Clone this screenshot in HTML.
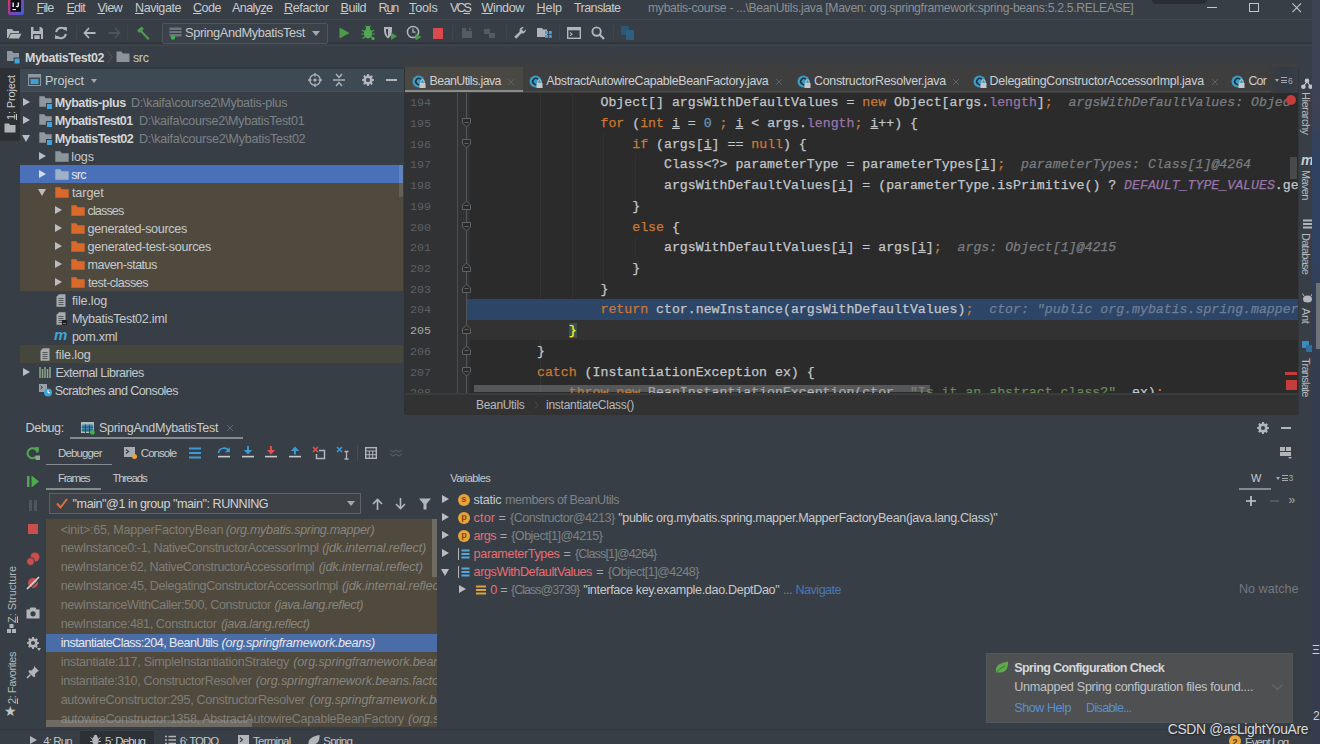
<!DOCTYPE html>
<html>
<head>
<meta charset="utf-8">
<title>mybatis-course - BeanUtils.java</title>
<style>
*{box-sizing:border-box;margin:0;padding:0}
html,body{width:1320px;height:744px;overflow:hidden;background:#383e45}
body{position:relative;font-family:"Liberation Sans",sans-serif;font-size:12.5px;color:#c3c6c9}
.a{position:absolute;white-space:pre}
.r{position:absolute}
u{text-decoration:underline;text-underline-offset:1px;text-decoration-thickness:1px}
svg{position:absolute;overflow:visible}
.mi{top:-1px;font-size:13px;line-height:16px;color:#c8cacc}
.tt{font-size:12.6px;line-height:18px;color:#c6c9cc}
.tb{font-weight:bold;color:#d3d5d7}
.tg{color:#7d8287}
.ln{left:410px;font-family:"Liberation Mono",monospace;font-size:12.6px;line-height:20px;color:#5c6064}
.cl{left:473.5px;font-family:"Liberation Mono",monospace;font-size:13.23px;line-height:20px;color:#c2c6ca;-webkit-text-stroke:0.250px currentColor}
.k{color:#cc7832}.f{color:#9876aa}.n{color:#6897bb}.h{color:#7a7d80;font-style:italic}.c{color:#9876aa;font-style:italic}.s{color:#6a8759}
.tab{font-size:12.5px;line-height:23px;color:#cdcfd1}
.fr{left:61px;font-size:12.5px;line-height:19px;color:#7f7d76}
.fr i{color:#85837b}
.vr{font-size:12.5px;line-height:18px;color:#c6c9cc}
.vn{color:#e2777a}.vg{color:#7d8287}
.sb{font-size:11.5px;line-height:14px;color:#c3c6c9}
.vt{font-size:11.5px;line-height:14px;color:#c3c6c9;transform-origin:0 0}
</style>
</head>
<body>
<div class="r" style="left:0px;top:0px;width:1320px;height:18px;background:#383e45;"></div>
<svg style="left:7.500px;top:-1.500px" width="16" height="16" viewBox="0 0 16 16"><defs><linearGradient id="ijg" x1="0" y1="0" x2="1" y2="0.600"><stop offset="0" stop-color="#ee3358"/><stop offset="0.450" stop-color="#8a3fa8"/><stop offset="1" stop-color="#4a5ad0"/></linearGradient></defs><rect x="0" y="0" width="16" height="16" rx="2.500" fill="url(#ijg)"/><rect x="2.500" y="0" width="10.500" height="12.800" fill="#0d0d18"/><rect x="4.500" y="10" width="3.500" height="1.100" fill="#fff"/><rect x="4.500" y="3.500" width="1.300" height="4.500" fill="#fff"/><path d="M8 7.300c1.500 0.800 2.300 0.300 2.300-1V3.500" stroke="#fff" stroke-width="1.300" fill="none"/></svg>
<div class="a mi" style="left:36.5px;top:0px;font-size:12.6px;letter-spacing:-0.826px;"><u>F</u>ile</div>
<div class="a mi" style="left:66.5px;top:0px;font-size:12.6px;letter-spacing:-0.803px;"><u>E</u>dit</div>
<div class="a mi" style="left:97.5px;top:0px;font-size:12.6px;letter-spacing:-0.646px;"><u>V</u>iew</div>
<div class="a mi" style="left:135px;top:0px;font-size:12.6px;letter-spacing:-0.466px;"><u>N</u>avigate</div>
<div class="a mi" style="left:193px;top:0px;font-size:12.6px;letter-spacing:-0.531px;"><u>C</u>ode</div>
<div class="a mi" style="left:232px;top:0px;font-size:12.6px;letter-spacing:-0.618px;">Analy<u>z</u>e</div>
<div class="a mi" style="left:284px;top:0px;font-size:12.6px;letter-spacing:-0.390px;"><u>R</u>efactor</div>
<div class="a mi" style="left:340.5px;top:0px;font-size:12.6px;letter-spacing:-0.504px;"><u>B</u>uild</div>
<div class="a mi" style="left:378.5px;top:0px;font-size:12.6px;letter-spacing:-1.205px;">R<u>u</u>n</div>
<div class="a mi" style="left:409px;top:0px;font-size:12.6px;letter-spacing:-0.183px;"><u>T</u>ools</div>
<div class="a mi" style="left:450px;top:0px;font-size:12.6px;letter-spacing:-1.970px;">VC<u>S</u></div>
<div class="a mi" style="left:481.5px;top:0px;font-size:12.6px;letter-spacing:-0.386px;"><u>W</u>indow</div>
<div class="a mi" style="left:536.5px;top:0px;font-size:12.6px;letter-spacing:-0.104px;"><u>H</u>elp</div>
<div class="a mi" style="left:574px;top:0px;font-size:12.6px;letter-spacing:-0.617px;">Translate</div>
<div class="a mi" style="left:648px;top:0px;color:#8b9095;font-size:12.2px;letter-spacing:-0.308px;">mybatis-course - ...\BeanUtils.java [Maven: org.springframework:spring-beans:5.2.5.RELEASE]</div>
<div class="r" style="left:1152px;top:-4px;width:55px;height:7.5px;background:#2a2e34;border-radius:4px"></div>
<div class="r" style="left:1207px;top:7px;width:9.5px;height:1.3px;background:#c3c6c9;"></div>
<div class="r" style="left:1248.500px;top:2.500px;width:10px;height:9.500px;border:1.200px solid #c3c6c9"></div>
<svg style="left:1291.500px;top:2.500px" width="9.500" height="9.500" viewBox="0 0 11 11"><path d="M0.5 0.5L10.5 10.5M10.5 0.5L0.5 10.5" stroke="#c3c6c9" stroke-width="1.300" fill="none"/></svg>
<div class="r" style="left:0px;top:18.5px;width:1320px;height:1px;background:#424850;"></div>
<div class="r" style="left:0px;top:42px;width:1320px;height:2.4px;background:#30353b;"></div>
<div class="r" style="left:0px;top:44.5px;width:1320px;height:1px;background:#40464d;"></div>
<svg style="left:6px;top:26px" width="16" height="14" viewBox="0 0 16 14"><path d="M1 3h5l1.5 2H13v2H4.5L2 12H1z" fill="#b2b6ba"/><path d="M5 7.8h10.5L13 12.5H2.6z" fill="#b2b6ba"/></svg>
<svg style="left:30px;top:26px" width="14" height="14" viewBox="0 0 14 14"><path d="M1 1h10l2 2v10H1z" fill="#b2b6ba"/><rect x="3.5" y="1" width="6" height="4" fill="#383e45"/><rect x="3" y="8" width="8" height="5" fill="#383e45"/><rect x="4.3" y="9.3" width="5.4" height="3.7" fill="#b2b6ba"/></svg>
<svg style="left:54px;top:26px" width="14" height="14" viewBox="0 0 14 14"><path d="M2.2 6.2A5 5 0 0 1 11 3.6" stroke="#b2b6ba" stroke-width="2" fill="none"/><path d="M9 1l4.2 0.2-0.6 4.4z" fill="#b2b6ba"/><path d="M11.8 7.8A5 5 0 0 1 3 10.4" stroke="#b2b6ba" stroke-width="2" fill="none"/><path d="M5 13l-4.2-0.2 0.6-4.4z" fill="#b2b6ba"/></svg>
<div class="r" style="left:76px;top:25px;width:1px;height:16px;background:#41464c;"></div>
<svg style="left:83px;top:27px" width="13" height="12" viewBox="0 0 13 12"><path d="M6 1L1.5 6 6 11M1.5 6H12.5" stroke="#b2b6ba" stroke-width="1.8" fill="none"/></svg>
<svg style="left:108px;top:27px" width="13" height="12" viewBox="0 0 13 12"><path d="M7 1L11.5 6 7 11M11.5 6H0.5" stroke="#50555a" stroke-width="1.8" fill="none"/></svg>
<div class="r" style="left:127px;top:25px;width:1px;height:16px;background:#41464c;"></div>
<svg style="left:135px;top:25px" width="16" height="16" viewBox="0 0 16 16"><path d="M2 5.5L6.5 1.5 9 4 4.5 8z" fill="#4f9c4f"/><path d="M6.5 5L14.5 13.5 13 15 5 6.5z" fill="#4f9c4f"/></svg>
<div class="r" style="left:162px;top:23px;width:166px;height:21px;border:1px solid #50555b;border-radius:2px;background:#3b4148"></div>
<svg style="left:169px;top:27px" width="14" height="13" viewBox="0 0 14 13"><rect x="0.5" y="0.5" width="12" height="9" fill="#6d747b"/><rect x="0.5" y="3" width="12" height="1" fill="#383e45"/><rect x="0.5" y="6" width="12" height="1" fill="#383e45"/><circle cx="4" cy="10.5" r="2.2" fill="#3fb24d"/></svg>
<div class="a mi" style="left:185px;top:24px;line-height:18px;color:#c8cacc;font-size:12.8px;letter-spacing:-0.368px;">SpringAndMybatisTest</div>
<div class="r" style="left:312px;top:31px;width:0;height:0;border-style:solid;border-width:5px 4.5px 0 4.5px;border-color:#a4a8ac transparent transparent transparent"></div>
<svg style="left:339px;top:27px" width="11" height="12" viewBox="0 0 11 12"><path d="M0.5 0.5L10.5 6 0.5 11.5z" fill="#4c9a4c"/></svg>
<svg style="left:361px;top:25px" width="15" height="16" viewBox="0 0 15 16"><ellipse cx="7" cy="8.5" rx="4" ry="5" fill="#4faa4f"/><circle cx="7" cy="3.2" r="2.2" fill="#4faa4f"/><path d="M1 5l3 2M13 5l-3 2M0.5 9h3M13.5 9h-3M1.5 13.5l3-2M12.5 13.5l-3-2M4.5 0.5l1.5 2M9.5 0.5l-1.500 2" stroke="#4faa4f" stroke-width="1.2"/><circle cx="12" cy="13.5" r="1.6" fill="#4faa4f"/></svg>
<svg style="left:383px;top:26px" width="15" height="15" viewBox="0 0 15 15"><path d="M1 1h8v3.5c0 4-2 6.500-4 8C3 11 1 8.500 1 4.500z" fill="#b2b6ba"/><path d="M5 3v7.500C3.800 9 3 7 3 4.500V3z" fill="#383e45"/><path d="M8 6.500l6 3.700-6 3.800z" fill="#4c9a4c"/></svg>
<svg style="left:406px;top:25px" width="16" height="16" viewBox="0 0 16 16"><circle cx="7" cy="7" r="5.600" stroke="#b2b6ba" stroke-width="1.500" fill="none"/><path d="M7 3.500V7.200H9.500" stroke="#b2b6ba" stroke-width="1.300" fill="none"/><path d="M9.500 8.500l6 3.500-6 3.500z" fill="#4c9a4c"/></svg>
<div class="r" style="left:432.5px;top:28px;width:10px;height:10.5px;background:#d94a4e;"></div>
<div class="r" style="left:452px;top:25px;width:1px;height:16px;background:#41464c;"></div>
<svg style="left:460px;top:26px" width="14" height="14" viewBox="0 0 14 14"><path d="M2 2h4v10H2zM6 5h6v7H6z" fill="#565b60"/><path d="M9 1l3 3H9z" fill="#565b60"/></svg>
<svg style="left:483px;top:26px" width="14" height="14" viewBox="0 0 14 14"><path d="M1 3h6v5H1zM6 7h6v5H6z" fill="#565b60"/></svg>
<div class="r" style="left:506px;top:25px;width:1px;height:16px;background:#41464c;"></div>
<svg style="left:513px;top:26px" width="14" height="14" viewBox="0 0 14 14"><path d="M12.800 3.200A3.600 3.600 0 0 1 8.300 7.400L3.200 12.800 1.200 10.800 6.600 5.700A3.600 3.600 0 0 1 10.800 1.200L8.600 3.400 10.600 5.400z" fill="#b2b6ba"/></svg>
<svg style="left:536px;top:26px" width="16" height="14" viewBox="0 0 16 14"><path d="M1 2h5l1 1.500H11V11H1z" fill="#b2b6ba"/><rect x="9" y="5" width="3" height="3" fill="#4a9cd6"/><rect x="12.800" y="5" width="3" height="3" fill="#4a9cd6"/><rect x="9" y="8.800" width="3" height="3" fill="#4a9cd6"/><rect x="12.800" y="8.800" width="3" height="3" fill="#4a9cd6"/></svg>
<div class="r" style="left:559px;top:25px;width:1px;height:16px;background:#41464c;"></div>
<svg style="left:567px;top:27px" width="14" height="12" viewBox="0 0 14 12"><rect x="0.700" y="0.700" width="12.600" height="10.600" stroke="#b2b6ba" stroke-width="1.400" fill="none"/><rect x="0.700" y="0.700" width="12.600" height="2.600" fill="#b2b6ba"/><path d="M3 5.500l2 1.700-2 1.700" stroke="#b2b6ba" stroke-width="1.100" fill="none"/></svg>
<svg style="left:591px;top:26px" width="14" height="14" viewBox="0 0 14 14"><circle cx="5.600" cy="5.600" r="4.200" stroke="#b2b6ba" stroke-width="1.900" fill="none"/><path d="M8.800 8.800L13 13" stroke="#b2b6ba" stroke-width="2.200"/></svg>
<div class="r" style="left:613px;top:25px;width:1px;height:16px;background:#41464c;"></div>
<svg style="left:621px;top:26px" width="13" height="14" viewBox="0 0 13 14"><rect x="0" y="0" width="8" height="9" rx="1" fill="#2b5676"/><rect x="5" y="4" width="8" height="10" rx="1" fill="#2e5f82"/></svg>
<div class="r" style="left:0px;top:68px;width:1320px;height:0px;background:#323539;"></div>
<svg style="left:6px;top:50px" width="15" height="14" viewBox="0 0 15 14"><path d="M1 1h5l1.500 2H13v8H1z" fill="#8e979f"/><rect x="8" y="8" width="6" height="6" fill="#3fa5d8" stroke="#383e45" stroke-width="1"/></svg>
<div class="a tt tb" style="left:25px;top:48.7px;font-size:12.4px;letter-spacing:-0.426px;">MybatisTest02</div>
<svg style="left:106px;top:50px" width="8" height="14" viewBox="0 0 8 14"><path d="M1.500 1L6 7 1.500 13" stroke="#4f5458" stroke-width="1.200" fill="none"/></svg>
<svg style="left:116px;top:51px" width="14" height="11" viewBox="0 0 14 11"><path d="M0.500 0.500h5l1.500 2H13.500v8.500H0.500z" fill="#8b949c"/></svg>
<div class="a tt" style="left:133px;top:48.7px;font-size:12.4px;letter-spacing:-0.343px;">src</div>
<div class="r" style="left:0px;top:68px;width:20px;height:676px;background:#383e45;"></div>
<div class="r" style="left:0px;top:68px;width:20px;height:73px;background:#2d3034;"></div>
<div class="a vt" style="left:4px;top:119.5px;transform:rotate(-90deg);font-size:11px;letter-spacing:-0.147px;color:#c9ccce"><u>1</u>: Project</div>
<svg style="left:4px;top:123px" width="12" height="10" viewBox="0 0 12 10"><path d="M0.5 0.5h4.500l1.200 1.600H11.500V9.500H0.500z" fill="#aeb3b8"/></svg>
<div class="a vt" style="left:5.3px;top:622.5px;transform:rotate(-90deg);font-size:11px;letter-spacing:-0.038px;color:#b4b8bb"><u>Z</u>: Structure</div>
<svg style="left:7px;top:623.5px" width="10" height="10" viewBox="0 0 10 10"><rect x="0" y="5" width="4" height="4" fill="#aeb3b8"/><rect x="5" y="5" width="4" height="4" fill="#aeb3b8"/><rect x="2.500" y="0" width="4" height="4" fill="#aeb3b8"/></svg>
<div class="a vt" style="left:5.3px;top:704px;transform:rotate(-90deg);font-size:11px;letter-spacing:-0.456px;color:#b4b8bb"><u>2</u>: Favorites</div>
<div class="a" style="left:4px;top:702.500px;font-size:14px;line-height:16px;color:#c0c4c7">★</div>
<div class="r" style="left:20px;top:66.5px;width:384px;height:2.5px;background:#343a41;"></div>
<div class="r" style="left:20px;top:69px;width:384px;height:22px;background:#3d4953;"></div>
<div class="r" style="left:20px;top:90.5px;width:384px;height:1.5px;background:#46525d;"></div>
<svg style="left:28px;top:74px" width="13" height="12" viewBox="0 0 13 12"><rect x="0.500" y="0.500" width="12" height="11" fill="none" stroke="#8e979f" stroke-width="1"/><rect x="1" y="1" width="11" height="2.500" fill="#8e979f"/><rect x="2.500" y="5" width="8" height="5" fill="#3f9fd0"/></svg>
<div class="a tt" style="left:45px;top:72px;color:#c9ccce;font-size:12.6px;letter-spacing:-0.031px;">Project</div>
<div class="r" style="left:91px;top:79px;width:0;height:0;border-style:solid;border-width:4.500px 3.500px 0 3.500px;border-color:#a4a8ac transparent transparent transparent"></div>
<svg style="left:308px;top:73px" width="14" height="14" viewBox="0 0 14 14"><circle cx="7" cy="7" r="5.300" stroke="#b2b6ba" stroke-width="1.300" fill="none"/><circle cx="7" cy="7" r="1.600" fill="#b2b6ba"/><path d="M7 0v3.500M7 10.500V14M0 7h3.500M10.500 7H14" stroke="#b2b6ba" stroke-width="1.300"/></svg>
<svg style="left:333px;top:73px" width="12" height="14" viewBox="0 0 12 14"><path d="M0 7h12" stroke="#b2b6ba" stroke-width="1.400"/><path d="M3 1l3 3.500 3-3.500" stroke="#b2b6ba" stroke-width="1.400" fill="none"/><path d="M3 13l3-3.500 3 3.500" stroke="#b2b6ba" stroke-width="1.400" fill="none"/></svg>
<svg style="left:362px;top:74px" width="12" height="12" viewBox="0 0 14 14"><path d="M6 0h2l0.400 1.800 1.300 0.600 1.600-1 1.400 1.400-1 1.600 0.600 1.300L14 6v2l-1.800 0.400-0.600 1.300 1 1.600-1.400 1.400-1.600-1-1.300 0.600L8 14H6l-0.400-1.800-1.300-0.600-1.600 1-1.400-1.400 1-1.600-0.600-1.300L0 8V6l1.800-0.400 0.600-1.300-1-1.600 1.400-1.400 1.600 1 1.300-0.600z M7 4.600A2.400 2.400 0 1 0 7 9.400 2.400 2.400 0 1 0 7 4.600z" fill="#b2b6ba" fill-rule="evenodd"/></svg>
<div class="r" style="left:386px;top:79px;width:11px;height:2px;background:#b2b6ba;"></div>
<div class="r" style="left:20px;top:183px;width:383px;height:108px;background:#4f493e;"></div>
<div class="r" style="left:20px;top:165.3px;width:383px;height:17.8px;background:#4970b8;"></div>
<div class="r" style="left:20px;top:345px;width:383px;height:18px;background:#45473c;"></div>
<div class="r" style="left:399px;top:165.3px;width:4px;height:32px;background:rgba(255,255,255,0.130);"></div>
<div class="r" style="left:23px;top:97.5px;width:0;height:0;border-style:solid;border-width:4.500px 0 4.500px 7px;border-color:transparent transparent transparent #b9bdc1"></div>
<svg style="left:39px;top:95.5px" width="15" height="14" viewBox="0 0 15 14"><path d="M0.300 0.300h5l1.500 2H12.700v8.400H0.300z" fill="#8e979f"/><rect x="7.500" y="7.500" width="6" height="6" fill="#3fa5d8" stroke="#383e45" stroke-width="1"/></svg>
<div class="a tt tb" style="left:54.7px;top:93.8px;font-size:12.6px;letter-spacing:-0.501px;">Mybatis-plus</div>
<div class="a tt tg" style="left:131px;top:93.8px;font-size:12.6px;letter-spacing:-0.309px;">D:\kaifa\course2\Mybatis-plus</div>
<div class="r" style="left:23px;top:115.5px;width:0;height:0;border-style:solid;border-width:4.500px 0 4.500px 7px;border-color:transparent transparent transparent #b9bdc1"></div>
<svg style="left:39px;top:113.5px" width="15" height="14" viewBox="0 0 15 14"><path d="M0.300 0.300h5l1.500 2H12.700v8.400H0.300z" fill="#8e979f"/><rect x="7.500" y="7.500" width="6" height="6" fill="#3fa5d8" stroke="#383e45" stroke-width="1"/></svg>
<div class="a tt tb" style="left:54.7px;top:111.8px;font-size:12.6px;letter-spacing:-0.608px;">MybatisTest01</div>
<div class="a tt tg" style="left:139px;top:111.8px;font-size:12.6px;letter-spacing:-0.319px;">D:\kaifa\course2\MybatisTest01</div>
<div class="r" style="left:21.5px;top:135px;width:0;height:0;border-style:solid;border-width:7px 4.500px 0 4.500px;border-color:#b9bdc1 transparent transparent transparent"></div>
<svg style="left:39px;top:131.5px" width="15" height="14" viewBox="0 0 15 14"><path d="M0.300 0.300h5l1.500 2H12.700v8.400H0.300z" fill="#8e979f"/><rect x="7.500" y="7.500" width="6" height="6" fill="#3fa5d8" stroke="#383e45" stroke-width="1"/></svg>
<div class="a tt tb" style="left:54.7px;top:129.8px;font-size:12.6px;letter-spacing:-0.562px;">MybatisTest02</div>
<div class="a tt tg" style="left:139px;top:129.8px;font-size:12.6px;letter-spacing:-0.289px;">D:\kaifa\course2\MybatisTest02</div>
<div class="r" style="left:39px;top:151.5px;width:0;height:0;border-style:solid;border-width:4.500px 0 4.500px 7px;border-color:transparent transparent transparent #b9bdc1"></div>
<svg style="left:55px;top:150.8px" width="14" height="11" viewBox="0 0 14 11"><path d="M0.300 0.300h5l1.500 2H13.700v8.400H0.300z" fill="#8d959c"/></svg>
<div class="a tt" style="left:71.3px;top:147.8px;font-size:12.6px;letter-spacing:-0.129px;">logs</div>
<div class="r" style="left:39px;top:169.5px;width:0;height:0;border-style:solid;border-width:4.500px 0 4.500px 7px;border-color:transparent transparent transparent #d5dbe6"></div>
<svg style="left:55px;top:168.8px" width="14" height="11" viewBox="0 0 14 11"><path d="M0.300 0.300h5l1.500 2H13.700v8.400H0.300z" fill="#9fb0c9"/></svg>
<div class="a tt" style="left:71.3px;top:165.8px;color:#e4e8ef;font-size:12.6px;letter-spacing:-0.732px;">src</div>
<div class="r" style="left:37.5px;top:189px;width:0;height:0;border-style:solid;border-width:7px 4.500px 0 4.500px;border-color:#b9bdc1 transparent transparent transparent"></div>
<svg style="left:55px;top:186.8px" width="14" height="11" viewBox="0 0 14 11"><path d="M0.300 0.300h5l1.500 2H13.700v8.400H0.300z" fill="#d9682b"/></svg>
<div class="a tt" style="left:71.9px;top:183.8px;font-size:12.6px;letter-spacing:-0.070px;">target</div>
<div class="r" style="left:55px;top:205.5px;width:0;height:0;border-style:solid;border-width:4.500px 0 4.500px 7px;border-color:transparent transparent transparent #b9bdc1"></div>
<svg style="left:71px;top:204.8px" width="14" height="11" viewBox="0 0 14 11"><path d="M0.300 0.300h5l1.500 2H13.700v8.400H0.300z" fill="#d9682b"/></svg>
<div class="a tt" style="left:87.5px;top:201.8px;font-size:12.6px;letter-spacing:-0.874px;">classes</div>
<div class="r" style="left:55px;top:223.5px;width:0;height:0;border-style:solid;border-width:4.500px 0 4.500px 7px;border-color:transparent transparent transparent #b9bdc1"></div>
<svg style="left:71px;top:222.8px" width="14" height="11" viewBox="0 0 14 11"><path d="M0.300 0.300h5l1.500 2H13.700v8.400H0.300z" fill="#d9682b"/></svg>
<div class="a tt" style="left:87.5px;top:219.8px;font-size:12.6px;letter-spacing:-0.327px;">generated-sources</div>
<div class="r" style="left:55px;top:241.5px;width:0;height:0;border-style:solid;border-width:4.500px 0 4.500px 7px;border-color:transparent transparent transparent #b9bdc1"></div>
<svg style="left:71px;top:240.8px" width="14" height="11" viewBox="0 0 14 11"><path d="M0.300 0.300h5l1.500 2H13.700v8.400H0.300z" fill="#d9682b"/></svg>
<div class="a tt" style="left:87.5px;top:237.8px;font-size:12.6px;letter-spacing:-0.276px;">generated-test-sources</div>
<div class="r" style="left:55px;top:259.5px;width:0;height:0;border-style:solid;border-width:4.500px 0 4.500px 7px;border-color:transparent transparent transparent #b9bdc1"></div>
<svg style="left:71px;top:258.8px" width="14" height="11" viewBox="0 0 14 11"><path d="M0.300 0.300h5l1.500 2H13.700v8.400H0.300z" fill="#d9682b"/></svg>
<div class="a tt" style="left:87.5px;top:255.8px;font-size:12.6px;letter-spacing:-0.519px;">maven-status</div>
<div class="r" style="left:55px;top:277.5px;width:0;height:0;border-style:solid;border-width:4.500px 0 4.500px 7px;border-color:transparent transparent transparent #b9bdc1"></div>
<svg style="left:71px;top:276.8px" width="14" height="11" viewBox="0 0 14 11"><path d="M0.300 0.300h5l1.500 2H13.700v8.400H0.300z" fill="#d9682b"/></svg>
<div class="a tt" style="left:88px;top:273.8px;font-size:12.6px;letter-spacing:-0.543px;">test-classes</div>
<svg style="left:56px;top:293.5px" width="10" height="13" viewBox="0 0 10 13"><path d="M3 0.300h6.500v12.400H0.500V2.800z" fill="#a5abb1"/><path d="M2.500 4.500h5M2.500 6.500h5M2.500 8.500h5M2.500 10.500h5" stroke="#4a4d50" stroke-width="0.900"/></svg>
<div class="a tt" style="left:71.9px;top:291.8px;font-size:12.6px;letter-spacing:-0.140px;">file.log</div>
<svg style="left:56px;top:311.5px" width="10" height="13" viewBox="0 0 10 13"><path d="M3 0.300h6.500v12.400H0.500V2.800z" fill="#a5abb1"/><path d="M2.500 4.500h5M2.500 6.500h5M2.500 8.500h5M2.500 10.500h5" stroke="#4a4d50" stroke-width="0.900"/></svg>
<div class="r" style="left:62px;top:320px;width:5px;height:5px;background:#1e1e1e;"></div>
<div class="r" style="left:63px;top:323px;width:3px;height:1px;background:#e0476f;"></div>
<div class="a tt" style="left:71.9px;top:309.8px;font-size:12.6px;letter-spacing:-0.296px;">MybatisTest02.iml</div>
<div class="a" style="left:54px;top:326px;font:italic bold 15px/18px 'Liberation Sans',sans-serif;color:#3fa5d8;letter-spacing:-1px">m</div>
<div class="a tt" style="left:71.9px;top:327.8px;font-size:12.6px;letter-spacing:-0.301px;">pom.xml</div>
<svg style="left:40px;top:347.5px" width="10" height="13" viewBox="0 0 10 13"><path d="M3 0.300h6.500v12.400H0.500V2.800z" fill="#a5abb1"/><path d="M2.500 4.500h5M2.500 6.500h5M2.500 8.500h5M2.500 10.500h5" stroke="#4a4d50" stroke-width="0.900"/></svg>
<div class="a tt" style="left:55.4px;top:345.8px;font-size:12.6px;letter-spacing:-0.140px;">file.log</div>
<div class="r" style="left:23px;top:367.5px;width:0;height:0;border-style:solid;border-width:4.500px 0 4.500px 7px;border-color:transparent transparent transparent #b9bdc1"></div>
<svg style="left:39px;top:366.5px" width="13" height="11" viewBox="0 0 13 11"><path d="M1 0v11M3.500 2v9M6 0v11M8.500 2v9M11 0v11" stroke="#8fa58a" stroke-width="1.500"/></svg>
<div class="a tt" style="left:55.4px;top:363.8px;font-size:12.6px;letter-spacing:-0.536px;">External Libraries</div>
<svg style="left:38px;top:383px" width="15" height="14" viewBox="0 0 15 14"><path d="M1 1h8v8H1z" fill="#9aa1a8"/><path d="M2.500 3l2 1.500-2 1.500" stroke="#383e45" stroke-width="1" fill="none"/><circle cx="10" cy="9.500" r="4" fill="#3fa5d8"/><path d="M10 7v2.700h2" stroke="#fff" stroke-width="1" fill="none"/></svg>
<div class="a tt" style="left:54.7px;top:381.8px;font-size:12.6px;letter-spacing:-0.608px;">Scratches and Consoles</div>
<div class="r" style="left:404px;top:56px;width:894px;height:11px;background:linear-gradient(to bottom,rgba(62,62,62,0),#3d3e3f)"></div>
<div class="r" style="left:404px;top:66.500px;width:894px;height:26px;background:linear-gradient(to right,#3e3e3e 0,#3e3e3e 860px,#343a44 880px,#383e45 100%)"></div>
<div class="r" style="left:404px;top:68px;width:1px;height:346px;background:#2f3235;"></div>
<div class="r" style="left:404.5px;top:66.5px;width:118px;height:23px;background:#4a4843;"></div>
<div class="r" style="left:404.5px;top:89.5px;width:118px;height:2.5px;background:#8a8d90;"></div>
<svg style="left:412px;top:74.5px" width="14" height="14" viewBox="0 0 14 14"><circle cx="6.500" cy="6.500" r="6" fill="#3a9bc4"/><path d="M8.800 4.300A3 3 0 1 0 8.800 8.700" stroke="#22303a" stroke-width="1.500" fill="none"/><rect x="7.500" y="8" width="6" height="5" fill="#c5c9cd"/><path d="M8.800 8V6.500a1.700 1.700 0 0 1 3.400 0V8" stroke="#c5c9cd" stroke-width="1" fill="none"/></svg>
<div class="a tab" style="left:429.6px;top:69.5px;font-size:12.4px;letter-spacing:-0.562px;">BeanUtils.java</div>
<svg style="left:508px;top:78.5px" width="6" height="6" viewBox="0 0 6 6"><path d="M0 0L6 6M6 0L0 6" stroke="#5d6267" stroke-width="1"/></svg>
<svg style="left:529px;top:74.5px" width="14" height="14" viewBox="0 0 14 14"><circle cx="6.500" cy="6.500" r="6" fill="#3a9bc4"/><path d="M8.800 4.300A3 3 0 1 0 8.800 8.700" stroke="#22303a" stroke-width="1.500" fill="none"/><rect x="7.500" y="8" width="6" height="5" fill="#c5c9cd"/><path d="M8.800 8V6.500a1.700 1.700 0 0 1 3.400 0V8" stroke="#c5c9cd" stroke-width="1" fill="none"/></svg>
<div class="a tab" style="left:546.3px;top:69.5px;font-size:12.4px;letter-spacing:-0.338px;">AbstractAutowireCapableBeanFactory.java</div>
<svg style="left:776px;top:78.5px" width="6" height="6" viewBox="0 0 6 6"><path d="M0 0L6 6M6 0L0 6" stroke="#5d6267" stroke-width="1"/></svg>
<svg style="left:797px;top:74.5px" width="14" height="14" viewBox="0 0 14 14"><circle cx="6.500" cy="6.500" r="6" fill="#3a9bc4"/><path d="M8.800 4.300A3 3 0 1 0 8.800 8.700" stroke="#22303a" stroke-width="1.500" fill="none"/><rect x="7.500" y="8" width="6" height="5" fill="#c5c9cd"/><path d="M8.800 8V6.500a1.700 1.700 0 0 1 3.400 0V8" stroke="#c5c9cd" stroke-width="1" fill="none"/></svg>
<div class="a tab" style="left:814px;top:69.5px;font-size:12.4px;letter-spacing:-0.272px;">ConstructorResolver.java</div>
<svg style="left:953px;top:78.5px" width="6" height="6" viewBox="0 0 6 6"><path d="M0 0L6 6M6 0L0 6" stroke="#5d6267" stroke-width="1"/></svg>
<svg style="left:973px;top:74.5px" width="14" height="14" viewBox="0 0 14 14"><circle cx="6.500" cy="6.500" r="6" fill="#3a9bc4"/><path d="M8.800 4.300A3 3 0 1 0 8.800 8.700" stroke="#22303a" stroke-width="1.500" fill="none"/><rect x="7.500" y="8" width="6" height="5" fill="#c5c9cd"/><path d="M8.800 8V6.500a1.700 1.700 0 0 1 3.400 0V8" stroke="#c5c9cd" stroke-width="1" fill="none"/></svg>
<div class="a tab" style="left:989.6px;top:69.5px;font-size:12.4px;letter-spacing:-0.252px;">DelegatingConstructorAccessorImpl.java</div>
<svg style="left:1212px;top:78.5px" width="6" height="6" viewBox="0 0 6 6"><path d="M0 0L6 6M6 0L0 6" stroke="#5d6267" stroke-width="1"/></svg>
<svg style="left:1231px;top:74.5px" width="14" height="14" viewBox="0 0 14 14"><circle cx="6.500" cy="6.500" r="6" fill="#3a9bc4"/><path d="M8.800 4.300A3 3 0 1 0 8.800 8.700" stroke="#22303a" stroke-width="1.500" fill="none"/><rect x="7.500" y="8" width="6" height="5" fill="#c5c9cd"/><path d="M8.800 8V6.500a1.700 1.700 0 0 1 3.400 0V8" stroke="#c5c9cd" stroke-width="1" fill="none"/></svg>
<div class="a tab" style="left:1248.5px;top:69.5px;font-size:12.4px;letter-spacing:-0.827px;">Cor</div>
<div class="r" style="left:1275px;top:79px;width:0;height:0;border-style:solid;border-width:3.500px 2.500px 0 2.500px;border-color:#a4a8ac transparent transparent transparent"></div>
<div class="r" style="left:1281px;top:77px;width:6px;height:1px;background:#a4a8ac;"></div>
<div class="r" style="left:1281px;top:79.5px;width:6px;height:1px;background:#a4a8ac;"></div>
<div class="r" style="left:1281px;top:82px;width:6px;height:1px;background:#a4a8ac;"></div>
<div class="a tab" style="left:1288px;top:69.5px;font-size:8.500px;color:#a4a8ac">6</div>
<div class="r" style="left:404.5px;top:90.8px;width:866px;height:1.4px;background:#4a4a4a;"></div>
<div class="r" style="left:404.5px;top:89.5px;width:118px;height:2.5px;background:#8a8d90;"></div>
<div class="r" style="left:405px;top:92.5px;width:893px;height:302px;background:#2b2b2b;"></div>
<div class="r" style="left:405px;top:92.5px;width:65px;height:302px;background:#303234;"></div>
<div class="r" style="left:457px;top:92.5px;width:1px;height:302px;background:#4c4f51;"></div>
<div class="r" style="left:540px;top:92.5px;width:1px;height:302px;background:#333435;"></div>
<div class="r" style="left:572px;top:92.0px;width:1px;height:227.92px;background:#313233;"></div>
<div class="r" style="left:603px;top:132.72px;width:1px;height:165.76px;background:#313233;"></div>
<div class="r" style="left:635px;top:153.44px;width:1px;height:51.8px;background:#313233;"></div>
<div class="r" style="left:635px;top:236.32px;width:1px;height:20.72px;background:#313233;"></div>
<div class="r" style="left:467px;top:319.61999999999995px;width:831px;height:20.72px;background:#323232;"></div>
<div class="r" style="left:467px;top:298.9px;width:831px;height:20.72px;background:#2d4566;"></div>
<div class="r" style="left:466px;top:92.5px;width:1px;height:302px;background:#55585a;"></div>
<svg style="left:461.500px;top:118.22px" width="9" height="9" viewBox="0 0 9 9"><path d="M0.500 0.500h8v4.500l-4 4-4-4z" fill="#2b2b2b" stroke="#5f6365" stroke-width="1"/><path d="M2.500 4.500h4" stroke="#5f6365" stroke-width="1"/></svg>
<svg style="left:461.500px;top:138.94px" width="9" height="9" viewBox="0 0 9 9"><path d="M0.500 0.500h8v4.500l-4 4-4-4z" fill="#2b2b2b" stroke="#5f6365" stroke-width="1"/><path d="M2.500 4.500h4" stroke="#5f6365" stroke-width="1"/></svg>
<svg style="left:461.500px;top:201.10px" width="9" height="9" viewBox="0 0 9 9"><path d="M0.500 8.500h8v-4.500l-4-4-4 4z" fill="#2b2b2b" stroke="#5f6365" stroke-width="1"/><path d="M2.500 4.500h4" stroke="#5f6365" stroke-width="1"/></svg>
<svg style="left:461.500px;top:221.82px" width="9" height="9" viewBox="0 0 9 9"><path d="M0.500 0.500h8v4.500l-4 4-4-4z" fill="#2b2b2b" stroke="#5f6365" stroke-width="1"/><path d="M2.500 4.500h4" stroke="#5f6365" stroke-width="1"/></svg>
<svg style="left:461.500px;top:263.26px" width="9" height="9" viewBox="0 0 9 9"><path d="M0.500 8.500h8v-4.500l-4-4-4 4z" fill="#2b2b2b" stroke="#5f6365" stroke-width="1"/><path d="M2.500 4.500h4" stroke="#5f6365" stroke-width="1"/></svg>
<svg style="left:461.500px;top:283.98px" width="9" height="9" viewBox="0 0 9 9"><path d="M0.500 8.500h8v-4.500l-4-4-4 4z" fill="#2b2b2b" stroke="#5f6365" stroke-width="1"/><path d="M2.500 4.500h4" stroke="#5f6365" stroke-width="1"/></svg>
<svg style="left:461.500px;top:325.42px" width="9" height="9" viewBox="0 0 9 9"><path d="M0.500 8.500h8v-4.500l-4-4-4 4z" fill="#2b2b2b" stroke="#5f6365" stroke-width="1"/><path d="M2.500 4.500h4" stroke="#5f6365" stroke-width="1"/></svg>
<svg style="left:461.500px;top:346.14px" width="9" height="9" viewBox="0 0 9 9"><path d="M0.500 8.500h8v-4.500l-4-4-4 4z" fill="#2b2b2b" stroke="#5f6365" stroke-width="1"/><path d="M2.500 4.500h4" stroke="#5f6365" stroke-width="1"/></svg>
<svg style="left:461.500px;top:366.86px" width="9" height="9" viewBox="0 0 9 9"><path d="M0.500 0.500h8v4.500l-4 4-4-4z" fill="#2b2b2b" stroke="#5f6365" stroke-width="1"/><path d="M2.500 4.500h4" stroke="#5f6365" stroke-width="1"/></svg>
<div class="r" style="left:405px;top:92.5px;width:893px;height:302px;overflow:hidden">
<div class="a ln" style="left:5px;top:0.70px;color:#5c6064;font-size:11.700px">194</div><div class="a cl" style="left:195.51px;top:0.70px">Object[] argsWithDefaultValues = <span class="k">new</span> Object[args.<span class="f">length</span>]<span class="k">;</span>  <span class="h">argsWithDefaultValues: Objec</span></div>
<div class="a ln" style="left:5px;top:21.42px;color:#5c6064;font-size:11.700px">195</div><div class="a cl" style="left:195.51px;top:21.42px"><span class="k">for</span> (<span class="k">int</span> <u>i</u> = <span class="n">0</span> <span class="k">;</span> <u>i</u> &lt; args.<span class="f">length</span><span class="k">;</span> <u>i</u>++) {</div>
<div class="a ln" style="left:5px;top:42.14px;color:#5c6064;font-size:11.700px">196</div><div class="a cl" style="left:227.26px;top:42.14px"><span class="k">if</span> (args[<u>i</u>] == <span class="k">null</span>) {</div>
<div class="a ln" style="left:5px;top:62.86px;color:#5c6064;font-size:11.700px">197</div><div class="a cl" style="left:259.01px;top:62.86px">Class&lt;?&gt; parameterType = parameterTypes[<u>i</u>]<span class="k">;</span>  <span class="h">parameterTypes: Class[1]@4264</span></div>
<div class="a ln" style="left:5px;top:83.58px;color:#5c6064;font-size:11.700px">198</div><div class="a cl" style="left:259.01px;top:83.58px">argsWithDefaultValues[<u>i</u>] = (parameterType.isPrimitive() ? <span class="c">DEFAULT_TYPE_VALUES</span>.get(parameterType) : <span class="k">null</span>)<span class="k">;</span></div>
<div class="a ln" style="left:5px;top:104.30px;color:#5c6064;font-size:11.700px">199</div><div class="a cl" style="left:227.26px;top:104.30px">}</div>
<div class="a ln" style="left:5px;top:125.02px;color:#5c6064;font-size:11.700px">200</div><div class="a cl" style="left:227.26px;top:125.02px"><span class="k">else</span> {</div>
<div class="a ln" style="left:5px;top:145.74px;color:#5c6064;font-size:11.700px">201</div><div class="a cl" style="left:259.01px;top:145.74px">argsWithDefaultValues[<u>i</u>] = args[<u>i</u>]<span class="k">;</span>  <span class="h">args: Object[1]@4215</span></div>
<div class="a ln" style="left:5px;top:166.46px;color:#5c6064;font-size:11.700px">202</div><div class="a cl" style="left:227.26px;top:166.46px">}</div>
<div class="a ln" style="left:5px;top:187.18px;color:#5c6064;font-size:11.700px">203</div><div class="a cl" style="left:195.51px;top:187.18px">}</div>
<div class="a ln" style="left:5px;top:207.90px;color:#5c6064;font-size:11.700px">204</div><div class="a cl" style="left:195.51px;top:207.90px"><span class="k">return</span> ctor.newInstance(argsWithDefaultValues)<span class="k">;</span>  <span class="h" style="color:#6d7f99">ctor: "public org.mybatis.spring.mapper.MapperFactoryBean(java.lang.Class)"</span></div>
<div class="a ln" style="left:5px;top:228.62px;color:#a6a8aa;font-size:11.700px">205</div><div class="a cl" style="left:163.76px;top:228.62px"><span style="background:#3b514d;color:#ffef28">}</span></div>
<div class="a ln" style="left:5px;top:249.34px;color:#5c6064;font-size:11.700px">206</div><div class="a cl" style="left:132.00px;top:249.34px">}</div>
<div class="a ln" style="left:5px;top:270.06px;color:#5c6064;font-size:11.700px">207</div><div class="a cl" style="left:132.00px;top:270.06px"><span class="k">catch</span> (InstantiationException ex) {</div>
<div class="a ln" style="left:5px;top:290.78px;color:#5c6064;font-size:11.700px">208</div><div class="a cl" style="left:163.76px;top:290.78px"><span class="k">throw new</span> BeanInstantiationException(ctor, <span class="s">"Is it an abstract class?"</span><span class="k">,</span> ex)<span class="k">;</span></div>
<div class="r" style="left:69px;top:292.500px;width:456px;height:6.500px;background:rgba(130,132,134,0.500)"></div>
</div>
<div class="r" style="left:1289.5px;top:157px;width:7.5px;height:22px;background:#48494b;"></div>
<div class="r" style="left:1286px;top:95px;width:10px;height:10px;border-radius:5px;background:#c63c3c"></div>
<div class="r" style="left:1285px;top:372px;width:12px;height:3px;background:#c63c3c;"></div>
<div class="r" style="left:1286px;top:380px;width:11px;height:10px;background:#c63c3c;"></div>
<div class="r" style="left:404.5px;top:393px;width:893.5px;height:22.2px;background:#323232;"></div>
<div class="r" style="left:404.5px;top:393px;width:893.5px;height:1.5px;background:#3a3b3b;"></div>
<div class="a tt" style="left:476px;top:396px;color:#b6b9bc;font-size:12px;letter-spacing:-0.318px;">BeanUtils</div>
<svg style="left:534px;top:401px" width="5" height="8" viewBox="0 0 5 8"><path d="M1 0.500L4 4 1 7.500" stroke="#484c50" stroke-width="1" fill="none"/></svg>
<div class="a tt" style="left:546px;top:396px;color:#b6b9bc;font-size:12px;letter-spacing:-0.261px;">instantiateClass()</div>
<div class="r" style="left:20px;top:415.2px;width:1278px;height:329px;background:#383e45;"></div>
<div class="a tt" style="left:25.6px;top:419px;color:#c9ccce;font-size:12.6px;letter-spacing:-0.405px;">Debug:</div>
<svg style="left:81px;top:421.5px" width="14" height="13" viewBox="0 0 14 13"><rect x="0.500" y="0.500" width="12" height="10" fill="#3f8fb5" stroke="#b4b9be" stroke-width="1"/><rect x="0" y="0" width="13" height="2.500" fill="#b4b9be"/><path d="M0.500 5.200h12M0.500 8h12M4.500 2.500v8.500M8.500 2.500v8.500" stroke="#2f3a44" stroke-width="0.800"/><circle cx="11.500" cy="10.500" r="2.300" fill="#3fb24d"/></svg>
<div class="a tt" style="left:98.9px;top:419px;color:#c9ccce;font-size:12.6px;letter-spacing:-0.303px;">SpringAndMybatisTest</div>
<svg style="left:227px;top:425px" width="6" height="6" viewBox="0 0 6 6"><path d="M0 0L6 6M6 0L0 6" stroke="#62676c" stroke-width="1"/></svg>
<div class="r" style="left:70px;top:437.3px;width:173px;height:2px;background:#858a8f;"></div>
<svg style="left:1257px;top:421.5px" width="12" height="12" viewBox="0 0 14 14"><path d="M6 0h2l0.400 1.800 1.300 0.600 1.600-1 1.400 1.400-1 1.600 0.600 1.300L14 6v2l-1.800 0.400-0.600 1.300 1 1.600-1.400 1.400-1.600-1-1.300 0.600L8 14H6l-0.400-1.800-1.300-0.600-1.600 1-1.400-1.400 1-1.600-0.600-1.300L0 8V6l1.800-0.400 0.600-1.300-1-1.600 1.400-1.400 1.600 1 1.300-0.600z M7 4.600A2.400 2.400 0 1 0 7 9.400 2.400 2.400 0 1 0 7 4.600z" fill="#b2b6ba" fill-rule="evenodd"/></svg>
<div class="r" style="left:1281px;top:427px;width:10px;height:2px;background:#b2b6ba;"></div>
<svg style="left:26px;top:446px" width="14" height="14" viewBox="0 0 14 14"><path d="M11.500 6.500A5 5 0 1 0 10 10.800" stroke="#4faa4f" stroke-width="2" fill="none"/><path d="M8.500 1l4.500 0.300-0.300 4.700z" fill="#4faa4f"/><rect x="9.500" y="9.500" width="4.500" height="4.500" fill="#9aa0a6"/></svg>
<div class="a tt" style="left:58px;top:444px;font-size:11.500px;font-size:11.5px;letter-spacing:-0.864px;">Debugger</div>
<div class="r" style="left:46px;top:463.5px;width:66px;height:1.8px;background:#858a8f;"></div>
<svg style="left:124px;top:447px" width="13" height="12" viewBox="0 0 13 12"><rect x="0" y="0" width="11" height="10" fill="#a5abb1"/><path d="M2 2.500l2.500 2-2.500 2" stroke="#383e45" stroke-width="1.200" fill="none"/><circle cx="10.500" cy="9.500" r="2.500" fill="#e8a33d"/></svg>
<div class="a tt" style="left:140.8px;top:444px;font-size:11.5px;letter-spacing:-0.956px;">Console</div>
<svg style="left:189px;top:447px" width="12" height="12" viewBox="0 0 12 12"><path d="M0 1.500h12M0 6h12M0 10.500h12" stroke="#3e9ad6" stroke-width="1.800"/></svg>
<svg style="left:217px;top:446px" width="14" height="12" viewBox="0 0 14 12"><path d="M1.500 7A5.500 5.500 0 0 1 11.800 5" stroke="#3e9ad6" stroke-width="1.700" fill="none"/><path d="M12.800 1.300v4.900h-4.900z" fill="#3e9ad6"/><rect x="1" y="9.800" width="12" height="1.600" fill="#c5c9cd"/></svg>
<svg style="left:242px;top:446px" width="12" height="12" viewBox="0 0 12 12"><path d="M6 0v6" stroke="#3e9ad6" stroke-width="1.900"/><path d="M1.800 4l4.200 4.400 4.200-4.400z" fill="#3e9ad6"/><rect x="0" y="9.800" width="12" height="1.600" fill="#c5c9cd"/></svg>
<svg style="left:265px;top:446px" width="12" height="12" viewBox="0 0 12 12"><path d="M6 0v6" stroke="#e0524f" stroke-width="1.900"/><path d="M1.800 4l4.200 4.400 4.200-4.400z" fill="#e0524f"/><rect x="0" y="9.800" width="12" height="1.600" fill="#c5c9cd"/></svg>
<svg style="left:289px;top:446px" width="12" height="12" viewBox="0 0 12 12"><path d="M6 2.500v6" stroke="#3e9ad6" stroke-width="1.900"/><path d="M1.800 5l4.200-4.400 4.200 4.400z" fill="#3e9ad6"/><rect x="0" y="9.800" width="12" height="1.600" fill="#c5c9cd"/></svg>
<svg style="left:312px;top:446px" width="14" height="14" viewBox="0 0 14 14"><path d="M1 1l5 5M6 1L1 6" stroke="#d9534f" stroke-width="1.600"/><path d="M7 4.500h5.500v8H4.500V8" stroke="#b2b6ba" stroke-width="1.500" fill="none"/></svg>
<svg style="left:336px;top:446px" width="14" height="14" viewBox="0 0 14 14"><path d="M1 1l5 5M6 1L1 6" stroke="#3e9ad6" stroke-width="1.600"/><path d="M8.500 5.500h4M8.500 13h4M10.500 5.500V13" stroke="#b2b6ba" stroke-width="1.300" fill="none"/></svg>
<div class="r" style="left:357px;top:445px;width:1px;height:16px;background:#4a4e52;"></div>
<svg style="left:365px;top:447px" width="12" height="12" viewBox="0 0 12 12"><rect x="0.700" y="0.700" width="10.600" height="10.600" stroke="#b2b6ba" stroke-width="1.400" fill="none"/><path d="M0.700 4h10.600M4.300 4v7.300M7.700 4v7.300M0.700 7.700h10.600" stroke="#b2b6ba" stroke-width="1"/></svg>
<svg style="left:390px;top:448px" width="12" height="10" viewBox="0 0 12 10"><path d="M0 2l3 2 3-2 3 2 3-2M0 6l3 2 3-2 3 2 3-2" stroke="#54595e" stroke-width="1.300" fill="none"/></svg>
<svg style="left:1280px;top:447px" width="12" height="12" viewBox="0 0 12 12"><rect x="0" y="0" width="5" height="4" fill="#b2b6ba"/><rect x="6" y="0" width="5" height="4" fill="#b2b6ba"/><rect x="0" y="5" width="11" height="4" fill="#b2b6ba"/><path d="M8 10h4l-2 2z" fill="#b2b6ba"/></svg>
<svg style="left:27px;top:475px" width="12" height="13" viewBox="0 0 12 13"><rect x="0" y="1" width="2.500" height="11" fill="#4faa4f"/><path d="M4.500 0.500L12 6.500 4.500 12.500z" fill="#4faa4f"/></svg>
<div class="r" style="left:29px;top:500px;width:2.5px;height:11px;background:#50555a;"></div>
<div class="r" style="left:34px;top:500px;width:2.5px;height:11px;background:#50555a;"></div>
<div class="r" style="left:28px;top:524px;width:10px;height:10px;background:#c94f4f;"></div>
<svg style="left:26px;top:552px" width="14" height="14" viewBox="0 0 14 14"><circle cx="9" cy="5" r="4.500" fill="#c94f4f"/><circle cx="4.500" cy="9.500" r="4" fill="#c94f4f" stroke="#383e45" stroke-width="1"/></svg>
<svg style="left:26px;top:576px" width="14" height="14" viewBox="0 0 14 14"><circle cx="7" cy="7" r="5" fill="#c94f4f"/><path d="M1 13L13 1" stroke="#d8dadc" stroke-width="1.600"/><path d="M3 14L14 3" stroke="#383e45" stroke-width="1"/></svg>
<svg style="left:26px;top:607px" width="14" height="12" viewBox="0 0 14 12"><path d="M0.500 2.500h3l1-2h5l1 2h3v9H0.500z" fill="#b2b6ba"/><circle cx="7" cy="6.800" r="2.600" fill="#383e45"/></svg>
<svg style="left:27px;top:637px" width="12" height="12" viewBox="0 0 14 14"><path d="M6 0h2l0.400 1.800 1.300 0.600 1.600-1 1.400 1.400-1 1.600 0.600 1.300L14 6v2l-1.800 0.400-0.600 1.300 1 1.600-1.400 1.400-1.600-1-1.300 0.600L8 14H6l-0.400-1.800-1.300-0.600-1.600 1-1.400-1.400 1-1.600-0.600-1.300L0 8V6l1.800-0.400 0.600-1.300-1-1.600 1.400-1.400 1.600 1 1.300-0.600z M7 4.600A2.400 2.400 0 1 0 7 9.400 2.400 2.400 0 1 0 7 4.600z" fill="#b2b6ba" fill-rule="evenodd"/></svg>
<div class="r" style="left:37px;top:648px;width:0;height:0;border-style:solid;border-width:3px 2.500px 0 2.500px;border-color:#b2b6ba transparent transparent transparent"></div>
<svg style="left:26px;top:665px" width="14" height="14" viewBox="0 0 14 14"><path d="M8 1l5 5-1.500 0.500-2.500 2.500 0.300 2.700-1.800 0.300-5-5 0.300-1.800 2.700 0.300 2.500-2.500z" fill="#b2b6ba"/><path d="M4.500 9.500L1 13" stroke="#b2b6ba" stroke-width="1.600"/></svg>
<div class="a tt" style="left:58px;top:468.5px;font-size:11.5px;letter-spacing:-1.279px;">Frames</div>
<div class="r" style="left:46px;top:487.8px;width:55px;height:1.8px;background:#858a8f;"></div>
<div class="a tt" style="left:112.5px;top:468.5px;font-size:11.5px;letter-spacing:-1.156px;">Threads</div>
<div class="r" style="left:49px;top:493px;width:311.500px;height:21px;border:1px solid #5e6368;background:#3e4247"></div>
<svg style="left:56px;top:498px" width="12" height="11" viewBox="0 0 12 11"><path d="M1 5.500l3.500 4L11 1" stroke="#e0703a" stroke-width="2" fill="none"/></svg>
<div class="a tt" style="left:72.6px;top:494.5px;color:#d0d3d6;font-size:12.6px;letter-spacing:-0.453px;">"main"@1 in group "main": RUNNING</div>
<div class="r" style="left:346.500px;top:501px;width:0;height:0;border-style:solid;border-width:5px 4px 0 4px;border-color:#a4a8ac transparent transparent transparent"></div>
<svg style="left:371.5px;top:497.5px" width="11" height="12" viewBox="0 0 11 12"><path d="M5.500 12V1.500M1 6l4.500-4.500L10 6" stroke="#b2b6ba" stroke-width="1.600" fill="none"/></svg>
<svg style="left:395px;top:497.5px" width="11" height="12" viewBox="0 0 11 12"><path d="M5.500 0v10.500M1 6l4.500 4.500L10 6" stroke="#b2b6ba" stroke-width="1.600" fill="none"/></svg>
<svg style="left:419px;top:498px" width="12" height="12" viewBox="0 0 12 12"><path d="M0 0.500h12L7.500 6v5.500h-3V6z" fill="#b2b6ba"/></svg>
<div class="r" style="left:46px;top:518.5px;width:391px;height:208.5px;background:#4f493e;"></div>
<div class="r" style="left:46px;top:518.5px;width:391px;height:208.500px;overflow:hidden">
<div class="a fr" style="left:14.700000000000003px;top:2.00px;color:#807e77;font-size:12.600px;letter-spacing:-0.246px">&lt;init&gt;:65, MapperFactoryBean</div><div class="a fr" style="left:179.7px;top:2.00px;color:#87857d;font-style:italic;font-size:12.600px;letter-spacing:-0.328px">(org.mybatis.spring.mapper)</div>
<div class="a fr" style="left:14.700000000000003px;top:20.95px;color:#807e77;font-size:12.600px;letter-spacing:-0.387px">newInstance0:-1, NativeConstructorAccessorImpl</div><div class="a fr" style="left:276.2px;top:20.95px;color:#87857d;font-style:italic;font-size:12.600px;letter-spacing:-0.143px">(jdk.internal.reflect)</div>
<div class="a fr" style="left:14.700000000000003px;top:39.90px;color:#807e77;font-size:12.600px;letter-spacing:-0.401px">newInstance:62, NativeConstructorAccessorImpl</div><div class="a fr" style="left:272.8px;top:39.90px;color:#87857d;font-style:italic;font-size:12.600px;letter-spacing:-0.143px">(jdk.internal.reflect)</div>
<div class="a fr" style="left:14.700000000000003px;top:58.85px;color:#807e77;font-size:12.600px;letter-spacing:-0.383px">newInstance:45, DelegatingConstructorAccessorImpl</div><div class="a fr" style="left:296.0px;top:58.85px;color:#87857d;font-style:italic;font-size:12.600px;letter-spacing:-0.143px">(jdk.internal.reflect)</div>
<div class="a fr" style="left:14.700000000000003px;top:77.80px;color:#807e77;font-size:12.600px;letter-spacing:-0.400px">newInstanceWithCaller:500, Constructor</div><div class="a fr" style="left:228.5px;top:77.80px;color:#87857d;font-style:italic;font-size:12.600px;letter-spacing:-0.423px">(java.lang.reflect)</div>
<div class="a fr" style="left:14.700000000000003px;top:96.75px;color:#807e77;font-size:12.600px;letter-spacing:-0.414px">newInstance:481, Constructor</div><div class="a fr" style="left:175.0px;top:96.75px;color:#87857d;font-style:italic;font-size:12.600px;letter-spacing:-0.423px">(java.lang.reflect)</div>
<div class="r" style="left:0;top:115.0px;width:391px;height:18.500px;background:#4a6da8"></div><div class="a fr" style="left:14.700000000000003px;top:115.70px;color:#e6e9ee;font-size:12.600px;letter-spacing:-0.545px">instantiateClass:204, BeanUtils</div><div class="a fr" style="left:175.6px;top:115.70px;color:#e6e9ee;font-style:italic;font-size:12.600px;letter-spacing:-0.284px">(org.springframework.beans)</div>
<div class="a fr" style="left:14.700000000000003px;top:134.65px;color:#807e77;font-size:12.600px;letter-spacing:-0.296px">instantiate:117, SimpleInstantiationStrategy</div><div class="a fr" style="left:247.2px;top:134.65px;color:#87857d;font-style:italic;font-size:12.600px;letter-spacing:-0.139px">(org.springframework.beans.factory.support)</div>
<div class="a fr" style="left:14.700000000000003px;top:153.60px;color:#807e77;font-size:12.600px;letter-spacing:-0.359px">instantiate:310, ConstructorResolver</div><div class="a fr" style="left:209.7px;top:153.60px;color:#87857d;font-style:italic;font-size:12.600px;letter-spacing:-0.139px">(org.springframework.beans.factory.support)</div>
<div class="a fr" style="left:14.700000000000003px;top:172.55px;color:#807e77;font-size:12.600px;letter-spacing:-0.335px">autowireConstructor:295, ConstructorResolver</div><div class="a fr" style="left:263.6px;top:172.55px;color:#87857d;font-style:italic;font-size:12.600px;letter-spacing:-0.139px">(org.springframework.beans.factory.support)</div>
<div class="a fr" style="left:14.700000000000003px;top:191.50px;color:#807e77;font-size:12.600px;letter-spacing:-0.348px">autowireConstructor:1358, AbstractAutowireCapableBeanFactory</div><div class="a fr" style="left:362.1px;top:191.50px;color:#87857d;font-style:italic;font-size:12.600px;letter-spacing:-0.139px">(org.springframework.beans.factory.support)</div>
<div class="r" style="left:0;top:201px;width:206px;height:7.500px;background:rgba(160,160,158,0.400)"></div>
</div>
<div class="r" style="left:432px;top:518.5px;width:5px;height:58.5px;background:rgba(150,150,146,0.450);"></div>
<div class="a tt" style="left:450.2px;top:468.5px;font-size:11px;letter-spacing:-0.549px;">Variables</div>
<div class="r" style="left:442px;top:495.0px;width:0;height:0;border-style:solid;border-width:4.500px 0 4.500px 7px;border-color:transparent transparent transparent #b9bdc1"></div>
<div class="r" style="left:458px;top:493.5px;width:12px;height:12px;border-radius:6px;background:#e8a33d"></div><div class="a" style="left:461.2px;top:492.5px;font:bold 9px/13px 'Liberation Sans',sans-serif;color:#7a4b12">s</div>
<div class="a tt" style="left:473.6px;top:490.5px;color:#c6c9cc;font-size:12.6px;letter-spacing:-0.268px;">static</div>
<div class="a tt" style="left:504.9px;top:490.5px;color:#7d8287;font-size:12.6px;letter-spacing:-0.482px;">members of BeanUtils</div>
<div class="r" style="left:442px;top:513.2px;width:0;height:0;border-style:solid;border-width:4.500px 0 4.500px 7px;border-color:transparent transparent transparent #b9bdc1"></div>
<div class="r" style="left:458px;top:511.70000000000005px;width:12px;height:12px;border-radius:6px;background:#e8a33d"></div><div class="a" style="left:461.2px;top:510.70000000000005px;font:bold 9px/13px 'Liberation Sans',sans-serif;color:#7a4b12">p</div>
<div class="a tt" style="left:473.6px;top:508.70000000000005px;color:#e56f75;font-size:12.6px;letter-spacing:0.149px;">ctor</div>
<div class="a tt" style="left:498.5px;top:508.70000000000005px;color:#a3a7ab;font-size:12.6px;letter-spacing:0.642px;">=</div>
<div class="a tt" style="left:510px;top:508.70000000000005px;color:#7d8287;font-size:12.6px;letter-spacing:-0.537px;">{Constructor@4213}</div>
<div class="a tt" style="left:618.2px;top:508.70000000000005px;color:#c6c9cc;font-size:12.6px;letter-spacing:-0.375px;">"public org.mybatis.spring.mapper.MapperFactoryBean(java.lang.Class)"</div>
<div class="r" style="left:442px;top:531.1px;width:0;height:0;border-style:solid;border-width:4.500px 0 4.500px 7px;border-color:transparent transparent transparent #b9bdc1"></div>
<div class="r" style="left:458px;top:529.6px;width:12px;height:12px;border-radius:6px;background:#e8a33d"></div><div class="a" style="left:461.2px;top:528.6px;font:bold 9px/13px 'Liberation Sans',sans-serif;color:#7a4b12">p</div>
<div class="a tt" style="left:473.6px;top:526.6px;color:#e56f75;font-size:12.6px;letter-spacing:-0.478px;">args</div>
<div class="a tt" style="left:499.7px;top:526.6px;color:#a3a7ab;font-size:12.6px;letter-spacing:0.642px;">=</div>
<div class="a tt" style="left:511.2px;top:526.6px;color:#7d8287;font-size:12.6px;letter-spacing:-0.523px;">{Object[1]@4215}</div>
<div class="r" style="left:442px;top:549.1px;width:0;height:0;border-style:solid;border-width:4.500px 0 4.500px 7px;border-color:transparent transparent transparent #b9bdc1"></div>
<svg style="left:458px;top:547.6px" width="12" height="12" viewBox="0 0 12 12"><path d="M0.500 0v12" stroke="#b2b6ba" stroke-width="1"/><path d="M3.500 2.500h8M3.500 6h8M3.500 9.500h8" stroke="#55a7d9" stroke-width="1.800"/></svg>
<div class="a tt" style="left:473.6px;top:544.6px;color:#e56f75;font-size:12.6px;letter-spacing:-0.360px;">parameterTypes</div>
<div class="a tt" style="left:563.4px;top:544.6px;color:#a3a7ab;font-size:12.6px;letter-spacing:0.642px;">=</div>
<div class="a tt" style="left:575px;top:544.6px;color:#7d8287;font-size:12.6px;letter-spacing:-0.884px;">{Class[1]@4264}</div>
<div class="r" style="left:440.5px;top:568.6px;width:0;height:0;border-style:solid;border-width:7px 4.500px 0 4.500px;border-color:#b9bdc1 transparent transparent transparent"></div>
<svg style="left:458px;top:565.6px" width="12" height="12" viewBox="0 0 12 12"><path d="M0.500 0v12" stroke="#b2b6ba" stroke-width="1"/><path d="M3.500 2.500h8M3.500 6h8M3.500 9.500h8" stroke="#55a7d9" stroke-width="1.800"/></svg>
<div class="a tt" style="left:473.6px;top:562.6px;color:#e56f75;font-size:12.6px;letter-spacing:-0.420px;">argsWithDefaultValues</div>
<div class="a tt" style="left:596.2px;top:562.6px;color:#a3a7ab;font-size:12.6px;letter-spacing:0.642px;">=</div>
<div class="a tt" style="left:607.8px;top:562.6px;color:#7d8287;font-size:12.6px;letter-spacing:-0.529px;">{Object[1]@4248}</div>
<div class="r" style="left:458.5px;top:585.3px;width:0;height:0;border-style:solid;border-width:4.500px 0 4.500px 7px;border-color:transparent transparent transparent #b9bdc1"></div>
<svg style="left:475.5px;top:584.8px" width="10" height="10" viewBox="0 0 10 10"><path d="M0 1.500h10M0 5h10M0 8.500h10" stroke="#d9a343" stroke-width="2"/></svg>
<div class="a tt" style="left:490.3px;top:580.8px;color:#e56f75;font-size:12.6px;letter-spacing:-1.108px;">0</div>
<div class="a tt" style="left:500.2px;top:580.8px;color:#a3a7ab;font-size:12.6px;letter-spacing:0.642px;">=</div>
<div class="a tt" style="left:511.1px;top:580.8px;color:#7d8287;font-size:12.6px;letter-spacing:-1.062px;">{Class@3739}</div>
<div class="a tt" style="left:583.3px;top:580.8px;color:#c6c9cc;font-size:12.6px;letter-spacing:-0.347px;">"interface key.example.dao.DeptDao"</div>
<div class="a tt" style="left:783px;top:580.8px;color:#7d8287;font-size:12.6px;letter-spacing:-0.500px;">...</div>
<div class="a tt" style="left:795.5px;top:580.8px;color:#4a78b0;font-size:12.6px;letter-spacing:-0.516px;">Navigate</div>
<div class="a tt" style="left:1251px;top:468.5px;font-size:11px;letter-spacing:-0.882px;">W</div>
<div class="r" style="left:1239px;top:488.3px;width:31.5px;height:1.6px;background:#858a8f;"></div>
<div class="r" style="left:1275.500px;top:477px;width:0;height:0;border-style:solid;border-width:3.500px 2.500px 0 2.500px;border-color:#a4a8ac transparent transparent transparent"></div>
<div class="r" style="left:1281.5px;top:475px;width:6px;height:1px;background:#a4a8ac;"></div>
<div class="r" style="left:1281.5px;top:477.5px;width:6px;height:1px;background:#a4a8ac;"></div>
<div class="r" style="left:1281.5px;top:480px;width:6px;height:1px;background:#a4a8ac;"></div>
<div class="a tt" style="left:1288.5px;top:469px;font-size:8.500px;color:#a4a8ac">3</div>
<svg style="left:1246px;top:495.5px" width="10" height="10" viewBox="0 0 10 10"><path d="M5 0v10M0 5h10" stroke="#c6c9cc" stroke-width="1.600"/></svg>
<div class="r" style="left:1270px;top:500px;width:9px;height:1.5px;background:#54595e;"></div>
<div class="a tt" style="left:1288.5px;top:491px;color:#a4a8ac;font-size:12px">»</div>
<div class="r" style="left:1239px;top:580px;width:59px;height:18px;overflow:hidden"><div class="a tt" style="left:0;top:0;color:#73787d;font-size:12.600px">No watches</div></div>
<div class="r" style="left:1298px;top:68px;width:22px;height:346px;background:#383e45;"></div>
<div class="r" style="left:1298px;top:68px;width:1px;height:346px;background:#33363a;"></div>
<svg style="left:1300.5px;top:77.5px" width="12" height="11" viewBox="0 0 12 11"><circle cx="6" cy="2.800" r="2.300" fill="#c0c4c8"/><circle cx="2.400" cy="8.700" r="2.300" fill="#c0c4c8"/><circle cx="9.600" cy="8.700" r="2.300" fill="#c0c4c8"/><path d="M6 3.500L2.800 8M6 3.500L9.200 8" stroke="#c0c4c8" stroke-width="1.200"/></svg>
<div class="a vt" style="left:1313px;top:92.4px;transform:rotate(90deg);font-size:11px;letter-spacing:-0.497px;color:#b7bbbe">Hierarchy</div>
<div class="a" style="left:1301px;top:151px;font:italic bold 14px/18px 'Liberation Sans',sans-serif;color:#c9ccce;letter-spacing:-1px">m</div>
<div class="a vt" style="left:1313px;top:169.8px;transform:rotate(90deg);font-size:11px;letter-spacing:-0.683px;color:#b7bbbe">Maven</div>
<svg style="left:1302.5px;top:219px" width="10" height="10" viewBox="0 0 10 10"><path d="M0 1.500h10M0 5h10M0 8.500h10" stroke="#b2b6ba" stroke-width="2"/></svg>
<div class="a vt" style="left:1313px;top:233.3px;transform:rotate(90deg);font-size:11px;letter-spacing:-0.736px;color:#b7bbbe">Database</div>
<svg style="left:1302px;top:293px" width="11" height="10" viewBox="0 0 11 10"><ellipse cx="5.500" cy="6" rx="4.500" ry="3.500" fill="#b2b6ba"/><path d="M2 3L0.500 0.500M9 3l1.500-2.500" stroke="#b2b6ba" stroke-width="1"/></svg>
<div class="a vt" style="left:1313px;top:308.4px;transform:rotate(90deg);font-size:11px;letter-spacing:-0.304px;color:#b7bbbe">Ant</div>
<svg style="left:1301.5px;top:341px" width="11" height="11" viewBox="0 0 11 11"><rect x="0" y="0" width="7" height="7" rx="1" fill="#3a8cc0"/><rect x="4" y="4" width="7" height="7" rx="1" fill="#2f6f9a"/></svg>
<div class="a vt" style="left:1313px;top:357.9px;transform:rotate(90deg);font-size:11px;letter-spacing:-0.750px;color:#b7bbbe">Translate</div>
<div class="r" style="left:1298px;top:416px;width:22px;height:328px;background:#383e45;"></div>
<div class="r" style="left:1312px;top:0;width:8px;height:744px;background:linear-gradient(to bottom,#3e4353 0,#3c4254 115px,#2f4262 160px,#2f4262 250px,#343d50 310px,#343c4d 100%)"></div>
<div class="r" style="left:1316px;top:283px;width:4px;height:66px;background:#6f7378;"></div>
<div class="a tt" style="left:1312px;top:641px;font-size:12px;color:#d0d3d6">Ξ</div>
<div class="a tt" style="left:1313px;top:707px;font-size:12px;color:#d0d3d6">2</div>
<div class="r" style="left:986px;top:652.500px;width:306.500px;height:70px;background:#4e5052;border:1px solid #54575a"></div>
<svg style="left:995px;top:661px" width="14" height="13" viewBox="0 0 14 13"><path d="M1 11C0 5 4 2 13 0.500 13.500 7 11 12 4 11.500 3 11.500 2 11.500 1 11z" fill="#5fa84e"/><path d="M0.500 12.500C3 9 6 7 10 5" stroke="#3e7a35" stroke-width="1" fill="none"/></svg>
<div class="a tt tb" style="left:1014.3px;top:658.5px;color:#d4d6d8;font-size:12.6px;letter-spacing:-0.666px;">Spring Configuration Check</div>
<div class="a tt" style="left:1014.3px;top:677.5px;color:#c0c3c6;font-size:12.6px;letter-spacing:-0.292px;">Unmapped Spring configuration files found....</div>
<svg style="left:1272px;top:683.500px" width="11" height="7" viewBox="0 0 11 7"><path d="M0.500 0.500L5.500 5.500 10.500 0.500" stroke="#62676c" stroke-width="1.300" fill="none"/></svg>
<div class="a tt" style="left:1014.3px;top:698.5px;color:#5a8fd0;font-size:12.6px;letter-spacing:-0.471px;">Show Help</div>
<div class="a tt" style="left:1086px;top:698.5px;color:#5a8fd0;font-size:12.6px;letter-spacing:-0.682px;">Disable...</div>
<div class="r" style="left:0px;top:727.5px;width:1312px;height:16.5px;background:#383e45;"></div>
<div class="r" style="left:0px;top:729px;width:1312px;height:1px;background:#32373d;"></div>
<div class="r" style="left:80px;top:730.5px;width:73.5px;height:14px;background:#2d3034;"></div>
<div class="r" style="left:30px;top:736px;width:0;height:0;border-style:solid;border-width:4.500px 0 4.500px 7px;border-color:transparent transparent transparent #b2b6ba"></div>
<div class="a sb" style="left:43.3px;top:733.8px;font-size:11.5px;letter-spacing:-0.930px;"><u>4</u>: Run</div>
<svg style="left:90px;top:734px" width="11" height="12" viewBox="0 0 11 12"><ellipse cx="5.500" cy="6.500" rx="3.200" ry="4" fill="#b2b6ba"/><circle cx="5.500" cy="2.500" r="1.800" fill="#b2b6ba"/><path d="M0.500 3.500l2.500 2M10.500 3.500l-2.500 2M0 7.500h2.500M11 7.500h-2.500M1 11.500l2-1.500M10 11.500l-2-1.500" stroke="#b2b6ba" stroke-width="1"/></svg>
<div class="a sb" style="left:105px;top:733.8px;color:#d0d3d6;font-size:11.5px;letter-spacing:-0.834px;"><u>5</u>: Debug</div>
<svg style="left:165px;top:735px" width="11" height="10" viewBox="0 0 11 10"><path d="M0 1.500h2M3.500 1.500h7.500M0 5h2M3.500 5h7.500M0 8.500h2M3.500 8.500h7.500" stroke="#b2b6ba" stroke-width="1.600"/></svg>
<div class="a sb" style="left:179.7px;top:733.8px;font-size:11.5px;letter-spacing:-1.013px;"><u>6</u>: TODO</div>
<svg style="left:238px;top:734.5px" width="11" height="10" viewBox="0 0 11 10"><rect x="0" y="0" width="11" height="10" fill="#b2b6ba"/><path d="M2 2.500l2.500 2.200-2.500 2.200" stroke="#383e45" stroke-width="1.200" fill="none"/></svg>
<div class="a sb" style="left:253px;top:733.8px;font-size:11.5px;letter-spacing:-0.745px;">Terminal</div>
<svg style="left:308px;top:734.5px" width="12" height="10" viewBox="0 0 12 10"><path d="M0.500 9C0 4 4 1.500 11.500 0 12 5.500 10 10 3.500 9.500z" fill="#b2b6ba"/></svg>
<div class="a sb" style="left:323.2px;top:733.8px;font-size:11.5px;letter-spacing:-0.707px;">Spring</div>
<div class="r" style="left:1229px;top:735px;width:12px;height:12px;border-radius:6px;background:#e8a33d"></div>
<div class="a sb" style="left:1232.5px;top:735px;font-size:9px;color:#5a3a0c;font-weight:bold">2</div>
<div class="a sb" style="left:1245px;top:735px;font-size:11.5px;letter-spacing:-0.943px;">Event Log</div>
<div class="a tt" style="left:1167.8px;top:719.3px;color:#d9dadb;line-height:20px;text-shadow:0 0 2px rgba(40,44,48,0.900),1px 1px 1px rgba(40,44,48,0.800);font-size:13.9px;letter-spacing:-0.362px;">CSDN @asLightYouAre</div>
</body>
</html>
